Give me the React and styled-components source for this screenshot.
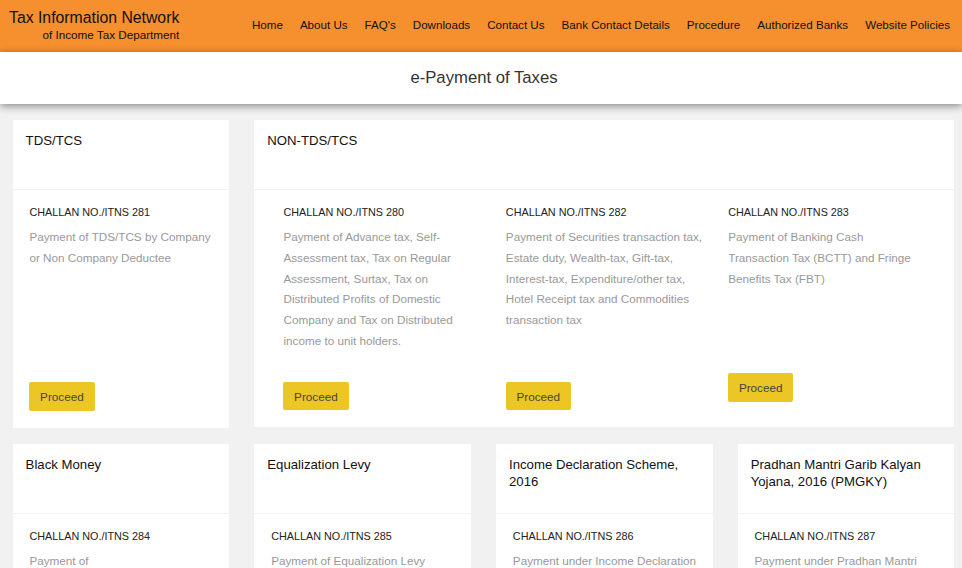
import React from "react";
import styled, { createGlobalStyle } from "styled-components";

const GlobalStyle = createGlobalStyle`
  html, body {
    margin: 0;
    height: 568px;
    overflow: hidden;
    background: #f1f1f1;
    font-family: "Liberation Sans", Arial, sans-serif;
  }
`;

const navLinks = [
  "Home",
  "About Us",
  "FAQ's",
  "Downloads",
  "Contact Us",
  "Bank Contact Details",
  "Procedure",
  "Authorized Banks",
  "Website Policies",
];

const App = () => (
  <>
    <GlobalStyle />
    <Header>
      <Brand>
        <BrandName>Tax Information Network</BrandName>
        <BrandSub>of Income Tax Department</BrandSub>
      </Brand>
      <Nav>
        {navLinks.map((link) => (
          <NavLink key={link}>{link}</NavLink>
        ))}
      </Nav>
    </Header>
    <SubHeader>e-Payment of Taxes</SubHeader>
    <Grid>
      <Card>
        <CardHead>TDS/TCS</CardHead>
        <CardBody>
          <Challan>
            <ChallanNo>CHALLAN NO./ITNS 281</ChallanNo>
            <Description $minHeight={124.5}>
              Payment of TDS/TCS by Company or Non Company Deductee
            </Description>
            <Proceed $height={29}>Proceed</Proceed>
          </Challan>
        </CardBody>
      </Card>
      <Card $span={3}>
        <CardHead>NON-TDS/TCS</CardHead>
        <WideBody>
          <Challan>
            <ChallanNo>CHALLAN NO./ITNS 280</ChallanNo>
            <Description $minHeight={124.5}>
              Payment of Advance tax, Self-Assessment tax, Tax on Regular
              Assessment, Surtax, Tax on Distributed Profits of Domestic Company
              and Tax on Distributed income to unit holders.
            </Description>
            <Proceed>Proceed</Proceed>
          </Challan>
          <Challan>
            <ChallanNo>CHALLAN NO./ITNS 282</ChallanNo>
            <Description $minHeight={124.5}>
              Payment of Securities transaction tax, Estate duty, Wealth-tax,
              Gift-tax, Interest-tax, Expenditure/other tax, Hotel Receipt tax
              and Commodities transaction tax
            </Description>
            <Proceed>Proceed</Proceed>
          </Challan>
          <Challan>
            <ChallanNo>CHALLAN NO./ITNS 283</ChallanNo>
            <Description $minHeight={115.5}>
              Payment of Banking Cash Transaction Tax (BCTT) and Fringe Benefits
              Tax (FBT)
            </Description>
            <Proceed $height={29}>Proceed</Proceed>
          </Challan>
        </WideBody>
      </Card>
      <Card>
        <CardHead>Black Money</CardHead>
        <CardBody>
          <Challan>
            <ChallanNo>CHALLAN NO./ITNS 284</ChallanNo>
            <Description>Payment of</Description>
          </Challan>
        </CardBody>
      </Card>
      <Card>
        <CardHead>Equalization Levy</CardHead>
        <CardBody>
          <Challan>
            <ChallanNo>CHALLAN NO./ITNS 285</ChallanNo>
            <Description>Payment of Equalization Levy</Description>
          </Challan>
        </CardBody>
      </Card>
      <Card>
        <CardHead>Income Declaration Scheme, 2016</CardHead>
        <CardBody>
          <Challan>
            <ChallanNo>CHALLAN NO./ITNS 286</ChallanNo>
            <Description>Payment under Income Declaration</Description>
          </Challan>
        </CardBody>
      </Card>
      <Card>
        <CardHead>Pradhan Mantri Garib Kalyan Yojana, 2016 (PMGKY)</CardHead>
        <CardBody>
          <Challan>
            <ChallanNo>CHALLAN NO./ITNS 287</ChallanNo>
            <Description>Payment under Pradhan Mantri</Description>
          </Challan>
        </CardBody>
      </Card>
    </Grid>
  </>
);

export default App;

const Header = styled.header`
  align-items: center;
  background: #f68f2e;
  box-sizing: border-box;
  display: flex;
  height: 52px;
  justify-content: space-between;
  padding: 0 12px 0 9px;
`;

const Brand = styled.div`
  color: #111;
  padding-bottom: 2px;
  text-align: right;
`;

const BrandName = styled.div`
  font-size: 15.8px;
  line-height: 18px;
`;

const BrandSub = styled.div`
  font-size: 11.7px;
  line-height: 15px;
`;

const Nav = styled.nav`
  display: flex;
  gap: 17px;
  padding-bottom: 3px;
`;

const NavLink = styled.a`
  color: #111;
  font-size: 11.6px;
  line-height: 15px;
  white-space: nowrap;
`;

const SubHeader = styled.div`
  background: #fff;
  box-shadow: 0 2px 8px rgba(0, 0, 0, 0.45);
  color: #333;
  font-size: 16.7px;
  height: 52px;
  line-height: 51px;
  padding-left: 6px;
  position: relative;
  text-align: center;
`;

const Grid = styled.main`
  align-items: start;
  display: grid;
  gap: 16px 25.1px;
  grid-template-columns: repeat(4, 216.6px);
  padding: 16px 0 0 12.6px;
`;

const Card = styled.section`
  background: #fff;
  grid-column: span ${({ $span }) => $span || 1};
`;

const CardHead = styled.h2`
  border-bottom: 1px solid #f1f1f1;
  box-sizing: border-box;
  color: #111;
  font-size: 13.2px;
  font-weight: 400;
  height: 70px;
  line-height: 17px;
  margin: 0;
  padding: 12px 13px 0;
`;

const CardBody = styled.div`
  padding: 15px 12px 17px 16.6px;
`;

const WideBody = styled.div`
  display: grid;
  gap: 25px;
  grid-template-columns: repeat(3, 197.4px);
  padding: 15px 0 17px 28.9px;
`;

const Challan = styled.div`
  align-items: flex-start;
  display: flex;
  flex-direction: column;
`;

const ChallanNo = styled.h3`
  color: #222;
  font-size: 10.8px;
  font-weight: 400;
  line-height: 14px;
  margin: 0 0 8px;
  padding-left: 0.3px;
`;

const Description = styled.p`
  color: #999;
  font-size: 11.7px;
  line-height: 20.75px;
  margin: 0;
  min-height: ${({ $minHeight }) => $minHeight || 0}px;
  padding-left: 0.3px;
`;

const Proceed = styled.button`
  background: #ecc625;
  border: 0;
  border-radius: 2px;
  color: #444;
  font-family: inherit;
  font-size: 11.7px;
  height: ${({ $height }) => $height || 28}px;
  margin-top: 30.5px;
  padding: 0;
  width: 65.4px;
`;
